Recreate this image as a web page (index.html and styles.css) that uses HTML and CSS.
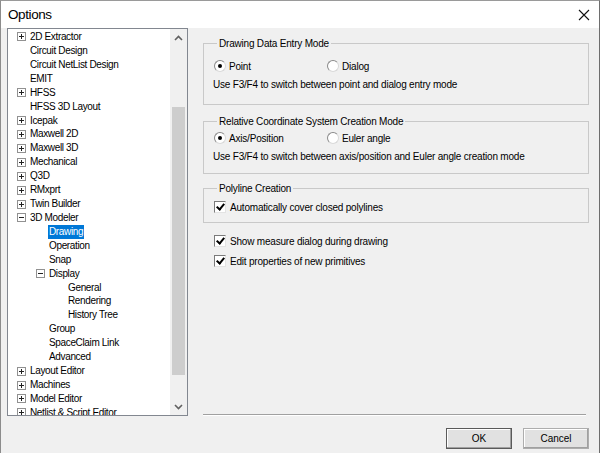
FILE: index.html
```html
<!DOCTYPE html>
<html>
<head>
	<title>Options</title>
	<link rel="stylesheet" href="styles.css">
</head>
<body>
	<div class="window">
		<div class="titlebar">
			<span class="title">Options</span>
			<svg class="close" width="12" height="12" viewBox="0 0 12 12">
				<path d="M1 1 L11 11 M11 1 L1 11" stroke="#111" stroke-width="1.1" fill="none"/>
			</svg>
		</div>
		<div class="main">
			<div class="tree">
				<ul class="tree-list">
					<li class="node l1"><span class="exp plus"></span><span class="label">2D Extractor</span></li>
					<li class="node l1"><span class="exp none"></span><span class="label">Circuit Design</span></li>
					<li class="node l1"><span class="exp none"></span><span class="label">Circuit NetList Design</span></li>
					<li class="node l1"><span class="exp none"></span><span class="label">EMIT</span></li>
					<li class="node l1"><span class="exp plus"></span><span class="label">HFSS</span></li>
					<li class="node l1"><span class="exp none"></span><span class="label">HFSS 3D Layout</span></li>
					<li class="node l1"><span class="exp plus"></span><span class="label">Icepak</span></li>
					<li class="node l1"><span class="exp plus"></span><span class="label">Maxwell 2D</span></li>
					<li class="node l1"><span class="exp plus"></span><span class="label">Maxwell 3D</span></li>
					<li class="node l1"><span class="exp plus"></span><span class="label">Mechanical</span></li>
					<li class="node l1"><span class="exp plus"></span><span class="label">Q3D</span></li>
					<li class="node l1"><span class="exp plus"></span><span class="label">RMxprt</span></li>
					<li class="node l1"><span class="exp plus"></span><span class="label">Twin Builder</span></li>
					<li class="node l1"><span class="exp minus"></span><span class="label">3D Modeler</span></li>
					<li class="node l2"><span class="exp none"></span><span class="label selected">Drawing</span></li>
					<li class="node l2"><span class="exp none"></span><span class="label">Operation</span></li>
					<li class="node l2"><span class="exp none"></span><span class="label">Snap</span></li>
					<li class="node l2"><span class="exp minus"></span><span class="label">Display</span></li>
					<li class="node l3"><span class="exp none"></span><span class="label">General</span></li>
					<li class="node l3"><span class="exp none"></span><span class="label">Rendering</span></li>
					<li class="node l3"><span class="exp none"></span><span class="label">History Tree</span></li>
					<li class="node l2"><span class="exp none"></span><span class="label">Group</span></li>
					<li class="node l2"><span class="exp none"></span><span class="label">SpaceClaim Link</span></li>
					<li class="node l2"><span class="exp none"></span><span class="label">Advanced</span></li>
					<li class="node l1"><span class="exp plus"></span><span class="label">Layout Editor</span></li>
					<li class="node l1"><span class="exp plus"></span><span class="label">Machines</span></li>
					<li class="node l1"><span class="exp plus"></span><span class="label">Model Editor</span></li>
					<li class="node l1"><span class="exp plus"></span><span class="label">Netlist &amp; Script Editor</span></li>
				</ul>
				<div class="scrollbar">
					<div class="arrow">
						<svg width="9" height="6" viewBox="0 0 9 6"><path d="M1 5 L4.5 1.5 L8 5" stroke="#606060" stroke-width="1.6" fill="none"/></svg>
					</div>
					<div class="track"><div class="thumb"></div></div>
					<div class="arrow">
						<svg width="9" height="6" viewBox="0 0 9 6"><path d="M1 1 L4.5 4.5 L8 1" stroke="#606060" stroke-width="1.6" fill="none"/></svg>
					</div>
				</div>
			</div>

			<div class="pane">
				<fieldset class="group g-entry">
					<legend>Drawing Data Entry Mode</legend>
					<div class="radios">
						<label class="opt w-point"><span class="radio on"></span>Point</label>
						<label class="opt"><span class="radio"></span>Dialog</label>
					</div>
					<p class="hint">Use F3/F4 to switch between point and dialog entry mode</p>
				</fieldset>

				<fieldset class="group g-coord">
					<legend>Relative Coordinate System Creation Mode</legend>
					<div class="radios">
						<label class="opt w-point"><span class="radio on"></span>Axis/Position</label>
						<label class="opt"><span class="radio"></span>Euler angle</label>
					</div>
					<p class="hint">Use F3/F4 to switch between axis/position and Euler angle creation mode</p>
				</fieldset>

				<fieldset class="group g-poly">
					<legend>Polyline Creation</legend>
					<label class="opt"><span class="check"></span>Automatically cover closed polylines</label>
				</fieldset>

				<div class="loose">
					<label class="opt"><span class="check"></span>Show measure dialog during drawing</label>
					<label class="opt"><span class="check"></span>Edit properties of new primitives</label>
				</div>

				<div class="separator"></div>
				<div class="buttons">
					<button class="btn default">OK</button>
					<button class="btn">Cancel</button>
				</div>
			</div>
		</div>
	</div>
</body>
</html>
```

FILE: styles.css
```css
*{
	margin: 0;
	padding: 0;
	box-sizing: border-box;
}
body{
	font-family: "Liberation Sans", Arial, sans-serif;
	font-size: 11px;
	color: #000;
	background: #f0f0f0;
}
.window{
	width: 600px;
	height: 453px;
	background: #f0f0f0;
	border-left: 1px solid #8c8c8c;
	border-right: 1px solid #6e6e6e;
	border-top: 1px solid #9a9a9a;
	display: flex;
	flex-direction: column;
	overflow: hidden;
}
.titlebar{
	height: 27px;
	background: #fff;
	display: flex;
	align-items: center;
	justify-content: space-between;
	padding: 0 9px 0 7px;
	flex-shrink: 0;
}
.title{
	font-size: 13.5px;
	letter-spacing: -0.4px;
	color: #000;
}
.close{
	display: block;
}

.main{
	flex: 1;
	display: flex;
}

/* tree */
.tree{
	width: 181px;
	height: 388px;
	margin-left: 6px;
	border: 1px solid #828790;
	background: #fff;
	display: flex;
	flex-shrink: 0;
}
.tree-list{
	list-style: none;
	flex: 1;
	overflow: hidden;
	padding-top: 1px;
}
.node{
	height: 13.93px;
	display: flex;
	align-items: center;
	white-space: nowrap;
	font-size: 10px;
	letter-spacing: -0.35px;
}
.l1{ padding-left: 9px; }
.l2{ padding-left: 28px; }
.l3{ padding-left: 47px; }
.exp{
	width: 9px;
	height: 9px;
	margin-right: 3px;
	position: relative;
	flex-shrink: 0;
}
.exp.plus, .exp.minus{
	border: 1px solid #919191;
}
.exp.plus:before, .exp.minus:before{
	content: "";
	position: absolute;
	left: 1px;
	top: 3px;
	width: 5px;
	height: 1px;
	background: #222;
}
.exp.plus:after{
	content: "";
	position: absolute;
	left: 3px;
	top: 1px;
	width: 1px;
	height: 5px;
	background: #222;
}
.label{
	padding: 0 1px;
	line-height: 14px;
}
.label.selected{
	background: #0078d7;
	color: #fff;
}

.scrollbar{
	width: 17px;
	background: #f0f0f0;
	display: flex;
	flex-direction: column;
	flex-shrink: 0;
}
.arrow{
	height: 17px;
	display: flex;
	align-items: center;
	justify-content: center;
}
.track{
	flex: 1;
	padding: 61px 2px 0;
}
.thumb{
	height: 268px;
	background: #cdcdcd;
}

/* right side */
.pane{
	flex: 1;
	margin: 0 10px 0 15px;
	display: flex;
	flex-direction: column;
	letter-spacing: -0.2px;
}
.group{
	border: 1px solid #c9c9c9;
	padding: 0 8px 0 8px;
}
.group legend{
	margin-left: 5px;
	padding: 0 2px;
	line-height: 13px;
	font-size: 10px;
}
.g-entry{
	margin-top: 9px;
	padding-top: 8px;
	padding-bottom: 11px;
}
.g-coord{
	margin-top: 10px;
	padding-top: 2px;
	padding-bottom: 8px;
}
.g-poly{
	margin-top: 8px;
	padding-top: 4px;
	padding-bottom: 7px;
}
.radios{
	display: flex;
	height: 16px;
	align-items: center;
}
.w-point{
	width: 113px;
}
.opt{
	display: flex;
	align-items: center;
	height: 16px;
	font-size: 10px;
	padding-left: 2px;
}
.hint{
	font-size: 10px;
	margin-top: 3px;
	line-height: 16px;
	padding-left: 1px;
}
.radio{
	width: 12px;
	height: 12px;
	border-radius: 50%;
	background: #fff;
	border: 1px solid;
	border-color: #8a8a8a #d8d8d8 #d8d8d8 #8a8a8a;
	margin-right: 3px;
	position: relative;
}
.radio.on:after{
	content: "";
	position: absolute;
	left: 3px;
	top: 3px;
	width: 4px;
	height: 4px;
	border-radius: 50%;
	background: #000;
}
.check{
	width: 12px;
	height: 12px;
	background: #fff;
	border: 1px solid;
	border-color: #7a7a7a #e3e3e3 #e3e3e3 #7a7a7a;
	margin-right: 4px;
	position: relative;
}
.check:after{
	content: "";
	position: absolute;
	left: 2.5px;
	top: 0px;
	width: 3px;
	height: 6px;
	border: solid #000;
	border-width: 0 2px 2px 0;
	transform: rotate(40deg);
}
.loose{
	padding: 10px 0 0 9px;
	display: flex;
	flex-direction: column;
	gap: 4px;
}

.separator{
	margin-top: auto;
	height: 2px;
	border-top: 1px solid #a0a0a0;
	border-bottom: 1px solid #fff;
	margin-right: 3px;
}
.buttons{
	display: flex;
	justify-content: flex-end;
	gap: 11px;
	padding: 12px 0 4px;
}
.btn{
	width: 66px;
	height: 21px;
	font-family: "Liberation Sans", Arial, sans-serif;
	font-size: 10px;
	background: #e1e1e1;
	border: 1px solid #adadad;
	box-shadow: inset -1px -1px 0 #a0a0a0, inset 1px 1px 0 #fff;
}
.btn.default{
	border-color: #5a5a5a;
}
```
